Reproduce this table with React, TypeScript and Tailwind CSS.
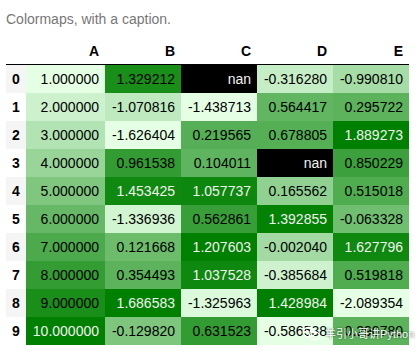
const cols = ["A", "B", "C", "D", "E"];

const data: (number | null)[][] = [
  [1, 1.329212, null, -0.31628, -0.99081],
  [2, -1.070816, -1.438713, 0.564417, 0.295722],
  [3, -1.626404, 0.219565, 0.678805, 1.889273],
  [4, 0.961538, 0.104011, null, 0.850229],
  [5, 1.453425, 1.057737, 0.165562, 0.515018],
  [6, -1.336936, 0.562861, 1.392855, -0.063328],
  [7, 0.121668, 1.207603, -0.00204, 1.627796],
  [8, 0.354493, 1.037528, -0.385684, 0.519818],
  [9, 1.686583, -1.325963, 1.428984, -2.089354],
  [10, -0.12982, 0.631523, -0.586538, 0.29078],
];

// light_palette("green"): #e5ffe5 -> #008000, scaled per column
const ranges = cols.map((_, c) => {
  const vals = data.map((r) => r[c]).filter((v): v is number => v !== null);
  return [Math.min(...vals), Math.max(...vals)];
});

function cellStyle(v: number | null, c: number) {
  if (v === null) return { backgroundColor: "#000000", color: "#f1f1f1" };
  const [lo, hi] = ranges[c];
  const t = (v - lo) / (hi - lo);
  const r = Math.round(229 * (1 - t));
  const g = Math.round(255 - 127 * t);
  return {
    backgroundColor: `rgb(${r},${g},${r})`,
    color: t > 0.91 ? "#f1f1f1" : "#000000",
  };
}

const widths = ["w-[79px]", "w-[76px]", "w-[76px]", "w-[76px]", "w-[76px]"];

export default function App() {
  return (
    <div className="relative h-[354px] w-[420px] overflow-hidden bg-white px-[6px] pt-[10px] font-['Liberation_Sans',Arial,sans-serif] text-[14px]">
      <div className="h-[27px] leading-[18px] text-[#777777]">Colormaps, with a caption.</div>

      <div className="w-[403px]">
        {/* header */}
        <div className="flex h-[28px] items-center border-b border-black pt-[2px] font-bold text-black">
          <div className="w-[20px]" />
          {cols.map((c, i) => (
            <div key={c} className={`${widths[i]} pr-[6px] text-right`}>
              {c}
            </div>
          ))}
        </div>

        {data.map((row, ri) => (
          <div key={ri} className="flex h-[28px]">
            <div
              className={`flex w-[20px] items-center justify-center font-bold text-black ${
                ri % 2 === 0 ? "bg-[#f5f5f5]" : "bg-white"
              }`}
            >
              {ri}
            </div>
            {row.map((v, ci) => (
              <div
                key={ci}
                className={`${widths[ci]} flex items-center justify-end pr-[6px]`}
                style={cellStyle(v, ci)}
              >
                {v === null ? "nan" : v.toFixed(6)}
              </div>
            ))}
          </div>
        ))}
      </div>

      {/* watermark */}
      <div className="absolute left-[302px] top-[326px] flex items-center gap-[4px] whitespace-nowrap text-[11px] text-white [text-shadow:0_0_2px_rgba(0,0,0,0.75)]">
        <svg width="19" height="16" viewBox="0 0 20 17" fill="none" stroke="#ffffff" strokeWidth="1.3">
          <ellipse cx="7.5" cy="6.5" rx="6.5" ry="5.2" />
          <ellipse cx="13" cy="10.5" rx="5.5" ry="4.3" />
          <circle cx="5.3" cy="5.5" r="0.7" fill="#ffffff" />
          <circle cx="9.5" cy="5.5" r="0.7" fill="#ffffff" />
        </svg>
        <span className="font-['Liberation_Sans','Noto_Sans_CJK_SC',sans-serif] leading-none">羊引小哥讲Python</span>
      </div>
    </div>
  );
}
